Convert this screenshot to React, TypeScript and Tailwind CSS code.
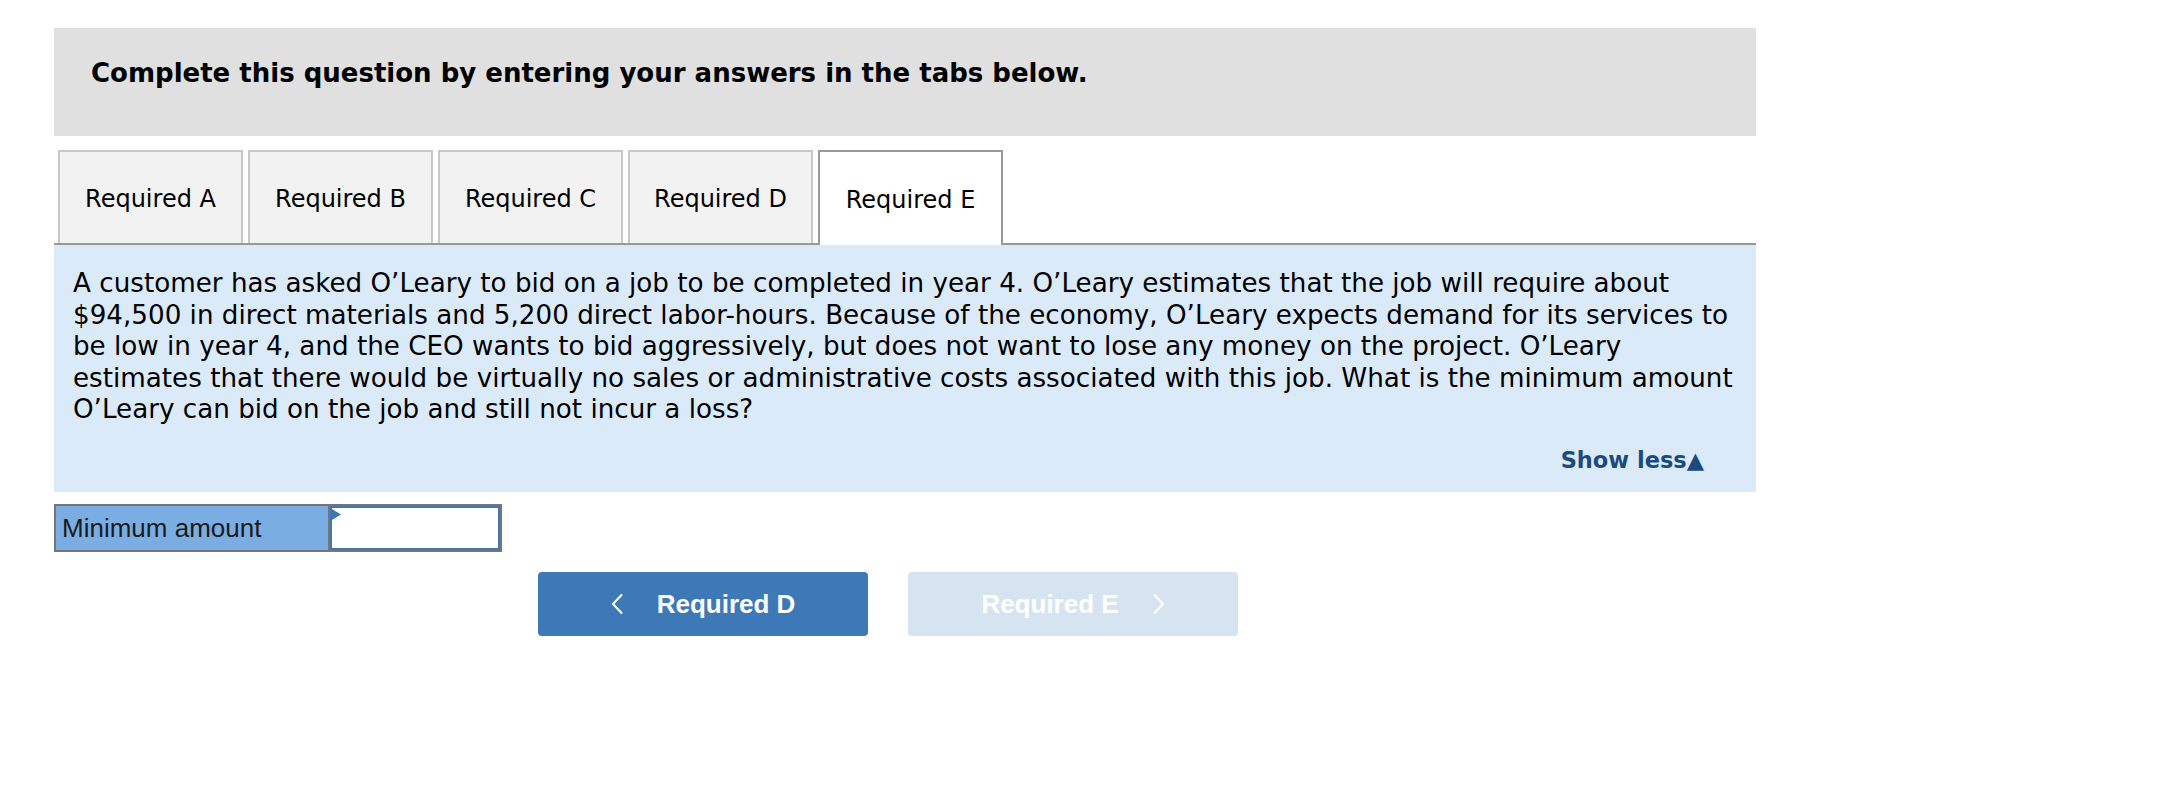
import React from 'react';

const tabs = ['Required A', 'Required B', 'Required C', 'Required D', 'Required E'];

const lines = [
  'A customer has asked O’Leary to bid on a job to be completed in year 4. O’Leary estimates that the job will require about',
  '$94,500 in direct materials and 5,200 direct labor-hours. Because of the economy, O’Leary expects demand for its services to',
  'be low in year 4, and the CEO wants to bid aggressively, but does not want to lose any money on the project. O’Leary',
  'estimates that there would be virtually no sales or administrative costs associated with this job. What is the minimum amount',
  'O’Leary can bid on the job and still not incur a loss?',
];

function Chevron({ dir }: { dir: 'left' | 'right' }) {
  return (
    <svg width="12" height="20" viewBox="0 0 12 20" fill="none" aria-hidden>
      <polyline
        points={dir === 'left' ? '10.5,1 2,10 10.5,19' : '1.5,1 10,10 1.5,19'}
        stroke="white"
        strokeWidth="2"
        strokeLinecap="round"
        strokeLinejoin="round"
      />
    </svg>
  );
}

export default function App() {
  const active = 4;

  return (
    <div className="min-h-[802px] w-[2158px] bg-white pt-[28px] pl-[54px] font-['DejaVu_Sans',sans-serif] text-black">
      <div className="w-[1702px]">
        {/* instructions bar */}
        <div className="h-[108px] bg-[#e0e0e0] pl-[37px] pt-[30px]">
          <p className="text-[26px] leading-[31px] font-bold">
            Complete this question by entering your answers in the tabs below.
          </p>
        </div>

        {/* tab strip */}
        <div className="mt-[14px] flex h-[95px] items-end gap-[5px] border-b-2 border-[#999999] pl-[4px]">
          {tabs.map((t, i) => {
            const isActive = i === active;
            return (
              <div
                key={t}
                className={
                  isActive
                    ? 'relative -mb-[2px] flex h-[95px] w-[185px] items-center justify-center border-2 border-b-0 border-[#999999] bg-white pt-[2px] text-[24px]'
                    : 'flex h-[93px] w-[185px] items-center justify-center border-2 border-b-0 border-[#c8c8c8] bg-[#f2f2f2] pt-[2px] text-[24px]'
                }
              >
                {t}
              </div>
            );
          })}
        </div>

        {/* question panel */}
        <div className="bg-[#dbeaf8] pl-[19px] pr-[52px] pt-[23px] pb-[16px]">
          <p className="text-[26.2px] leading-[31.5px] whitespace-nowrap">
            {lines.map((l, i) => (
              <React.Fragment key={i}>
                {l}
                {i < lines.length - 1 && <br />}
              </React.Fragment>
            ))}
          </p>
          <div className="mt-[19px] flex justify-end">
            <span className="text-[22.5px] leading-[31.5px] font-bold text-[#1b4a80]">
              Show less▲
            </span>
          </div>
        </div>

        {/* answer row */}
        <div className="mt-[12px] flex h-[48px] w-[448px] border-2 border-[#767676] font-['Liberation_Sans',Arial,sans-serif]">
          <div className="flex w-[272px] items-center bg-[#7aade2] pl-[6px] text-[26px] leading-[30px] text-[#1a1a1a]">
            Minimum amount
          </div>
          <div className="w-[2px] bg-[#767676]" />
          <div className="relative flex-1 border-2 border-[#3d77b6] bg-white">
            <svg className="absolute left-0 top-[1px]" width="9" height="11" viewBox="0 0 9 11" aria-hidden>
              <polygon points="0,0 9,5.5 0,11" fill="#3d77b6" />
            </svg>
          </div>
        </div>

        {/* nav buttons */}
        <div className="mt-[20px] ml-[484px] flex gap-[40px] font-['Liberation_Sans',Arial,sans-serif]">
          <button
            type="button"
            className="flex h-[64px] w-[330px] items-center justify-center gap-[34px] rounded-[4px] bg-[#3d78b7] text-[26px] font-bold text-white"
          >
            <Chevron dir="left" />
            <span>Required D</span>
          </button>
          <button
            type="button"
            className="flex h-[64px] w-[330px] items-center justify-center gap-[34px] rounded-[4px] bg-[#d6e3f1] text-[26px] font-bold text-white"
          >
            <span>Required E</span>
            <Chevron dir="right" />
          </button>
        </div>
      </div>
    </div>
  );
}
